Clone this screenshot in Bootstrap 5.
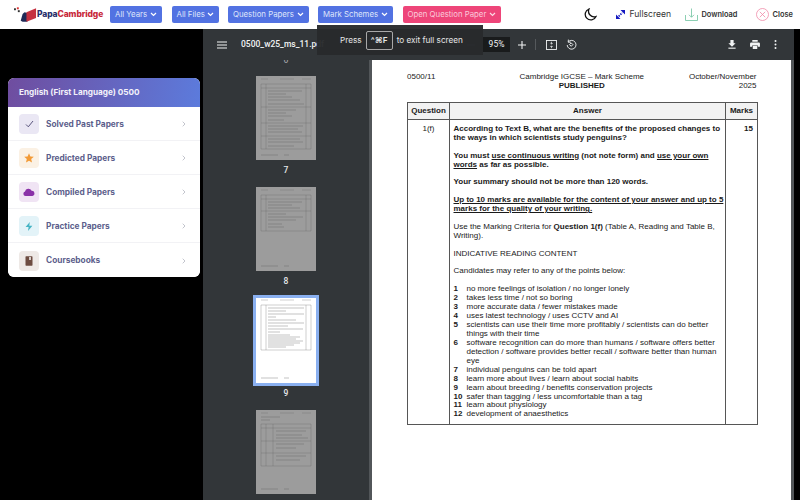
<!DOCTYPE html>
<html lang="en">
<head>
  <meta charset="UTF-8">
  <meta name="viewport" content="width=device-width, initial-scale=1.0">
  <title>PapaCambridge</title>
  <link href="https://cdn.jsdelivr.net/npm/bootstrap@5.3.0/dist/css/bootstrap.min.css" rel="stylesheet">
  <style>
    body {
      height: 500px;
      overflow: hidden;
      background-color: #000;
      font-family: "Inter", "Liberation Sans", sans-serif;
    }
    /* top bar */
    .top-bar {
      height: 29px;
      background-color: #fff;
      padding-left: 14px;
    }
    .logo-box {
      width: 96px;
    }
    .logo-text {
      font-size: 8.5px;
      font-weight: 800;
      color: #27306b;
      letter-spacing: -0.1px;
    }
    .logo-text span {
      color: #c8283a;
    }
    .paper-btn {
      height: 17px;
      padding: 0 5px;
      margin-right: 9.5px;
      border: 0;
      border-radius: 2px;
      background-color: #5272e2;
      color: #dfe5fb;
      font-size: 7.8px;
      line-height: 17px;
      white-space: nowrap;
      display: flex;
      align-items: center;
      justify-content: space-between;
    }
    .paper-btn:hover {
      background-color: #5272e2;
      color: #dfe5fb;
    }
    .paper-btn.pink {
      background-color: #ee4579;
      color: #fbc9d9;
    }
    .w-years { width: 52px; }
    .w-files { width: 47px; }
    .w-question { width: 81px; margin-right: 9px; }
    .w-mark { width: 75px; }
    .w-open { width: 98px; margin-right: 0; }
    .tool-moon { margin-left: 83px; width: 20px; }
    .tool-full {
      margin-left: 12px;
      gap: 5px;
      font-size: 8.6px;
      color: #333;
      width: 57px;
    }
    .tool-down {
      margin-left: 12px;
      gap: 4px;
      font-size: 7.4px;
      font-weight: 600;
      color: #333;
      width: 59px;
    }
    .tool-close {
      margin-left: 12px;
      gap: 4px;
      font-size: 7.4px;
      font-weight: 600;
      color: #333;
    }
    /* left menu */
    .left-side {
      width: 203px;
      padding: 49px 3px 0 8px;
      flex-shrink: 0;
    }
    .menu-card {
      border: 0;
      border-radius: 6px;
      overflow: hidden;
    }
    .menu-head {
      height: 29px;
      padding: 0 11px;
      background: linear-gradient(100deg, #6f4d9f, #5c7bdc);
      color: #f3f1fa;
      font-size: 8.2px;
      font-weight: 700;
      line-height: 29px;
      border: 0;
    }
    .menu-row {
      height: 34px;
      padding: 1px 14px 0 11px;
      gap: 7px;
      border-color: #f2f2f5;
      color: #5d5f8c;
      font-size: 8.3px;
      font-weight: 700;
    }
    .menu-icon {
      width: 20px;
      height: 20px;
      border-radius: 4px;
    }
    .ic-purple { background-color: #eae7f4; }
    .ic-orange { background-color: #fbf1e4; }
    .ic-violet { background-color: #f0e4f4; }
    .ic-cyan { background-color: #e3f3f8; }
    .ic-brown { background-color: #eee9e6; }
    /* pdf viewer */
    .pdf-viewer {
      width: 591px;
      height: 471px;
    }
    .pdf-toolbar {
      height: 31px;
      background-color: #323639;
      color: #f1f3f4;
      font-family: "Roboto", "Liberation Sans", sans-serif;
      font-size: 8.5px;
      padding-left: 14px;
    }
    .file-name {
      width: 147px;
      margin-left: 14px;
      font-weight: 500;
    }
    .page-count {
      width: 70px;
      color: #7c7f82;
    }
    .zoom-val {
      width: 27px;
      height: 15px;
      margin: 0 8px;
      line-height: 15px;
      text-align: center;
      background-color: #191b1c;
    }
    .bar-sep {
      width: 1px;
      height: 11px;
      margin: 0 10px 0 9px;
      background-color: #55595c;
    }
    .bar-right {
      margin-left: auto;
      gap: 14px;
      padding-right: 17px;
    }
    .bar-gap { margin-left: 9px; }
    .pdf-body {
      height: 440px;
    }
    .thumb-side {
      width: 166px;
      background-color: #323639;
      color: #e8eaed;
      font-family: "Roboto", "Liberation Sans", sans-serif;
      font-size: 8.5px;
      font-weight: 500;
      text-align: center;
      overflow: hidden;
      flex-shrink: 0;
    }
    .thumb-num-top {
      height: 16px;
      line-height: 0;
      color: #9a9da0;
    }
    .thumb-page {
      display: block;
      width: 60px;
      height: 84px;
      margin: 0 auto;
    }
    .thumb-num {
      height: 27px;
      line-height: 21px;
    }
    .thumb-on {
      width: 66px;
      height: 91px;
      margin: -3px auto 0;
      border: 3px solid #8ab0f0;
      background-color: #fff;
    }
    .thumb-on .thumb-page {
      margin: 0;
      height: 85px;
    }
    .thumb-on + .thumb-num {
      height: 24px;
      line-height: 15px;
    }
    .page-side {
      flex: 1;
      padding: 0 3px;
      background-color: #525659;
      overflow: hidden;
    }
    .paper-sheet {
      height: 440px;
      padding: 13px 34.5px 0 35px;
      background-color: #fff;
      color: #1a1a1a;
      font-family: "Liberation Sans", Arial, sans-serif;
      font-size: 8px;
      line-height: 8.95px;
    }
    .sheet-head {
      height: 29px;
    }
    .sheet-head > div {
      flex: 1;
    }
    .scheme-tbl {
      width: 350px;
      table-layout: fixed;
      border-collapse: collapse;
      margin: 0;
    }
    .scheme-tbl td, .scheme-tbl th {
      border: 1.5px solid #565656;
      padding: 0;
      color: #1a1a1a;
      background: transparent;
      box-shadow: none;
    }
    .scheme-tbl th {
      height: 17px;
      text-align: center;
      vertical-align: middle;
      background-color: #f2f2f2;
      font-weight: 700;
    }
    .scheme-tbl td {
      vertical-align: top;
      padding-top: 5px;
      padding-bottom: 5px;
    }
    .col-answer {
      padding-left: 3.5px !important;
      padding-right: 1px !important;
    }
    .answer-gap {
      margin-bottom: 8.8px;
    }
    .point-row {
      display: grid;
      grid-template-columns: 13px 1fr;
      padding-right: 2px;
    }
    /* fullscreen notice */
    .exit-note {
      position: absolute;
      top: 25px;
      left: 317px;
      width: 166px;
      height: 30px;
      padding-top: 1px;
      padding-left: 3px;
      background-color: rgba(40, 42, 44, 0.96);
      color: #e6e6e6;
      font-family: "Inter", "Liberation Sans", sans-serif;
      font-size: 8.2px;
      gap: 4px;
    }
    .exit-key {
      width: 27px;
      height: 19px;
      line-height: 17px;
      text-align: center;
      border: 1px solid #a8a8a8;
      border-radius: 2px;
      font-weight: 600;
    }
  </style>
</head>
<body class="position-relative">
  <div class="top-bar d-flex align-items-center">
    <div class="logo-box d-flex align-items-center">
      <svg width="23" height="16" viewBox="0 0 24 16">
        <rect x="0" y="1" width="2" height="2" fill="#333"/>
        <rect x="3" y="0" width="2" height="2" fill="#d33"/>
        <rect x="4" y="3" width="2" height="2" fill="#333"/>
        <path d="M7 14 L9 7 L11 5 L14 6 L14 15 L9 15 Z" fill="#1f2a57"/>
        <path d="M13 5 L23 1 L23 11 L13 15 Z" fill="#c5303f"/>
      </svg>
      <span class="logo-text">Papa<span>Cambridge</span></span>
    </div>
    <button class="btn paper-btn w-years">All Years <svg width="7" height="5" viewBox="0 0 7 5"><path d="M1 1 L3.5 3.5 L6 1" fill="none" stroke="#fff" stroke-width="1.2"/></svg></button>
    <button class="btn paper-btn w-files">All Files <svg width="7" height="5" viewBox="0 0 7 5"><path d="M1 1 L3.5 3.5 L6 1" fill="none" stroke="#fff" stroke-width="1.2"/></svg></button>
    <button class="btn paper-btn w-question">Question Papers <svg width="7" height="5" viewBox="0 0 7 5"><path d="M1 1 L3.5 3.5 L6 1" fill="none" stroke="#fff" stroke-width="1.2"/></svg></button>
    <button class="btn paper-btn w-mark">Mark Schemes <svg width="7" height="5" viewBox="0 0 7 5"><path d="M1 1 L3.5 3.5 L6 1" fill="none" stroke="#fff" stroke-width="1.2"/></svg></button>
    <button class="btn paper-btn pink w-open">Open Question Paper <svg width="7" height="5" viewBox="0 0 7 5"><path d="M1 1 L3.5 3.5 L6 1" fill="none" stroke="#fbd9e4" stroke-width="1.2"/></svg></button>
    <div class="tool-moon d-flex">
      <svg width="13" height="13" viewBox="0 0 13 13"><path d="M5 1 A5.6 5.6 0 1 0 12 8.5 A5.6 5.6 0 0 1 5 1 Z" fill="none" stroke="#111" stroke-width="1.3"/></svg>
    </div>
    <div class="tool-full d-flex align-items-center">
      <svg width="9" height="9" viewBox="0 0 10 10"><path d="M0 10 L0 5 L5 10 Z M10 0 L10 5 L5 0 Z" fill="#1418c0"/><path d="M3 7 L7 3" stroke="#1418c0" stroke-width="2" stroke-dasharray="1.5 1.2"/></svg>
      <span>Fullscreen</span>
    </div>
    <div class="tool-down d-flex align-items-center">
      <svg width="13" height="13" viewBox="0 0 13 13" fill="none" stroke="#6fc3a0" stroke-width="0.8"><path d="M0.5 7 L0.5 12.5 L12.5 12.5 L12.5 7"/><path d="M6.5 0.5 L6.5 9 M4 6.8 L6.5 9.3 L9 6.8"/></svg>
      <span>Download</span>
    </div>
    <div class="tool-close d-flex align-items-center">
      <svg width="13" height="13" viewBox="0 0 13 13" fill="none" stroke="#f08aa8" stroke-width="0.8"><circle cx="6.5" cy="6.5" r="6"/><path d="M3.8 3.8 L9.2 9.2 M9.2 3.8 L3.8 9.2"/></svg>
      <span>Close</span>
    </div>
  </div>

  <div class="d-flex">
    <div class="left-side">
      <div class="card menu-card">
        <div class="card-header menu-head">English (First Language) 0500</div>
        <div class="list-group list-group-flush">
          <div class="list-group-item menu-row d-flex align-items-center">
            <span class="menu-icon ic-purple d-flex align-items-center justify-content-center"><svg width="9" height="8" viewBox="0 0 9 8"><path d="M1 4.5 L3.3 6.8 L8 1" fill="none" stroke="#4b4570" stroke-width="0.9"/></svg></span>
            <span class="flex-grow-1">Solved Past Papers</span>
            <svg width="4" height="6" viewBox="0 0 4 6"><path d="M0.7 0.7 L3 3 L0.7 5.3" fill="none" stroke="#b4b6c0" stroke-width="0.8"/></svg>
          </div>
          <div class="list-group-item menu-row d-flex align-items-center">
            <span class="menu-icon ic-orange d-flex align-items-center justify-content-center"><svg width="10" height="10" viewBox="0 0 10 10"><path d="M5 0.3 L6.4 3.5 L9.8 3.8 L7.2 6.1 L8 9.6 L5 7.8 L2 9.6 L2.8 6.1 L0.2 3.8 L3.6 3.5 Z" fill="#f39a36"/></svg></span>
            <span class="flex-grow-1">Predicted Papers</span>
            <svg width="4" height="6" viewBox="0 0 4 6"><path d="M0.7 0.7 L3 3 L0.7 5.3" fill="none" stroke="#b4b6c0" stroke-width="0.8"/></svg>
          </div>
          <div class="list-group-item menu-row d-flex align-items-center">
            <span class="menu-icon ic-violet d-flex align-items-center justify-content-center"><svg width="12" height="8" viewBox="0 0 12 8"><path d="M2.5 8 A2.3 2.3 0 0 1 2 3.5 A3.5 3.5 0 0 1 8.6 2.7 A2.7 2.7 0 0 1 9.5 8 Z" fill="#8a32a8"/></svg></span>
            <span class="flex-grow-1">Compiled Papers</span>
            <svg width="4" height="6" viewBox="0 0 4 6"><path d="M0.7 0.7 L3 3 L0.7 5.3" fill="none" stroke="#b4b6c0" stroke-width="0.8"/></svg>
          </div>
          <div class="list-group-item menu-row d-flex align-items-center">
            <span class="menu-icon ic-cyan d-flex align-items-center justify-content-center"><svg width="8" height="9" viewBox="0 0 8 9"><path d="M4.8 0 L0.6 5 L3.6 5 L3 9 L7.4 3.8 L4.3 3.8 Z" fill="#45b4c4"/></svg></span>
            <span class="flex-grow-1">Practice Papers</span>
            <svg width="4" height="6" viewBox="0 0 4 6"><path d="M0.7 0.7 L3 3 L0.7 5.3" fill="none" stroke="#b4b6c0" stroke-width="0.8"/></svg>
          </div>
          <div class="list-group-item menu-row d-flex align-items-center">
            <span class="menu-icon ic-brown d-flex align-items-center justify-content-center"><svg width="8" height="10" viewBox="0 0 8 10"><rect x="0.5" y="0.3" width="7" height="9.4" rx="0.6" fill="#6d4c41"/><rect x="4" y="1" width="2" height="3" fill="#d7ccc8"/></svg></span>
            <span class="flex-grow-1">Coursebooks</span>
            <svg width="4" height="6" viewBox="0 0 4 6"><path d="M0.7 0.7 L3 3 L0.7 5.3" fill="none" stroke="#b4b6c0" stroke-width="0.8"/></svg>
          </div>
        </div>
      </div>
    </div>

    <div class="pdf-viewer">
      <div class="pdf-toolbar d-flex align-items-center">
        <svg width="10" height="8" viewBox="0 0 10 8"><path d="M0 1 H10 M0 4 H10 M0 7 H10" stroke="#f1f3f4" stroke-width="1.1"/></svg>
        <span class="file-name">0500_w25_ms_11.pdf</span>
        <span class="page-count text-end">9 / 23</span>
        <svg class="bar-gap" width="8" height="2" viewBox="0 0 8 2"><path d="M0 1 H8" stroke="#7c7f82" stroke-width="1.1"/></svg>
        <span class="zoom-val">95%</span>
        <svg width="8" height="8" viewBox="0 0 8 8"><path d="M0 4 H8 M4 0 V8" stroke="#f1f3f4" stroke-width="1.1"/></svg>
        <span class="bar-sep"></span>
        <svg width="11" height="10" viewBox="0 0 11 10" fill="none" stroke="#f1f3f4"><rect x="0.5" y="0.5" width="10" height="9" stroke-width="0.9"/><path d="M5.5 1.8 V4 M4.3 3 L5.5 4.2 L6.7 3 M5.5 8.2 V6 M4.3 7 L5.5 5.8 L6.7 7" stroke-width="0.7"/></svg>
        <svg class="bar-gap" width="11" height="11" viewBox="0 0 11 11" fill="none" stroke="#f1f3f4" stroke-width="0.9"><path d="M2.2 3 A4.4 4.4 0 1 1 1.2 6"/><path d="M2.4 0.6 L2.2 3.2 L4.8 3.2"/><rect x="4" y="4.4" width="2.4" height="2.4" transform="rotate(45 5.2 5.6)"/></svg>
        <div class="bar-right d-flex align-items-center">
          <svg width="8" height="9" viewBox="0 0 10 11" fill="#f1f3f4"><path d="M3 0 H7 V4 H9.5 L5 8.2 L0.5 4 H3 Z"/><rect x="0.5" y="9.4" width="9" height="1.4"/></svg>
          <svg width="10" height="9" viewBox="0 0 11 10" fill="#f1f3f4"><path d="M2.5 0 H8.5 V2 H2.5 Z M1.5 2.8 H9.5 A1.4 1.4 0 0 1 11 4.2 V7.5 H8.7 V6 H2.3 V7.5 H0 V4.2 A1.4 1.4 0 0 1 1.5 2.8 Z M3 6.8 H8 V10 H3 Z"/></svg>
          <svg width="3" height="9" viewBox="0 0 3 10" fill="#f1f3f4"><circle cx="1.5" cy="1.2" r="1.1"/><circle cx="1.5" cy="5" r="1.1"/><circle cx="1.5" cy="8.8" r="1.1"/></svg>
        </div>
      </div>

      <div class="pdf-body d-flex">
        <div class="thumb-side">
          <div class="thumb-num-top">6</div>
          <svg class="thumb-page" viewBox="0 0 60 84">
            <rect width="60" height="84" fill="#9c9c9c"/>
            <path d="M5 3 H12 M24 3 H38 M46 3 H55 M5 8 H55 M5 12 H55 M5 8 V73 M10 8 V73 M50 8 V73 M55 8 V73 M5 31 H55 M5 47 H55 M5 60 H55 M5 73 H55" stroke="#6a6a6a" stroke-width="0.35" fill="none"/>
            <path d="M12 15 H46 M12 18 H30 M12 21 H36 M12 24 H44 M12 28 H48 M12 34 H40 M12 37 H30 M12 40 H36 M12 44 H28 M12 50 H47 M12 53 H42 M12 56 H46 M12 63 H44 M12 66 H47 M12 70 H38 M5 79 H22 M28 79 H33" stroke="#7b7b7b" stroke-width="0.7" fill="none"/>
          </svg>
          <div class="thumb-num">7</div>
          <svg class="thumb-page" viewBox="0 0 60 84">
            <rect width="60" height="84" fill="#9c9c9c"/>
            <path d="M5 3 H12 M24 3 H38 M46 3 H55 M5 8 H55 M5 12 H55 M5 8 V44 M10 8 V44 M50 8 V44 M55 8 V44 M5 24 H55 M5 44 H55" stroke="#6a6a6a" stroke-width="0.35" fill="none"/>
            <path d="M12 15 H46 M12 18 H36 M12 21 H44 M12 27 H30 M12 30 H47 M12 33 H40 M12 37 H26 M12 40 H28 M5 79 H22 M28 79 H33" stroke="#7b7b7b" stroke-width="0.7" fill="none"/>
          </svg>
          <div class="thumb-num">8</div>
          <div class="thumb-on">
            <svg class="thumb-page" viewBox="0 0 60 85">
              <rect width="60" height="85" fill="#fff"/>
              <path d="M5 2 H12 M24 2 H38 M46 2 H55 M5 7 H55 M5 7 V52 M10 7 V52 M50 7 V52 M55 7 V52 M5 52 H55" stroke="#777" stroke-width="0.35" fill="none"/>
              <path d="M12 10 H48 M12 13 H30 M12 16 H48 M12 19 H20 M12 22 H40 M12 25 H48 M12 28 H32 M12 31 H47 M12 34 H24 M12 37 H34 M12 39 H44 M12 41 H40 M12 43 H47 M12 45 H44 M12 47 H38 M12 49 H30 M5 80 H22 M28 80 H33" stroke="#aaa" stroke-width="0.7" fill="none"/>
            </svg>
          </div>
          <div class="thumb-num">9</div>
          <svg class="thumb-page" viewBox="0 0 60 84">
            <rect width="60" height="84" fill="#9c9c9c"/>
            <path d="M5 3 H12 M24 3 H38 M46 3 H55 M5 14 H55 M5 18 H55 M5 14 V56 M10 14 V56 M17 14 V56 M55 14 V56 M5 31 H55 M5 43 H55 M5 56 H55" stroke="#6a6a6a" stroke-width="0.35" fill="none"/>
            <path d="M5 7 H24 M5 10 H14 M20 21 H50 M20 25 H46 M20 28 H52 M20 34 H48 M20 38 H40 M20 46 H50 M20 50 H44 M5 79 H22 M28 79 H33" stroke="#7b7b7b" stroke-width="0.7" fill="none"/>
          </svg>
        </div>

        <div class="page-side">
          <div class="paper-sheet">
            <div class="sheet-head d-flex">
              <div>0500/11</div>
              <div class="text-center text-nowrap">Cambridge IGCSE – Mark Scheme<br><b>PUBLISHED</b></div>
              <div class="text-end">October/November<br>2025</div>
            </div>
            <table class="table scheme-tbl">
              <colgroup><col style="width: 42px"><col style="width: 276px"><col style="width: 32px"></colgroup>
              <thead>
                <tr><th>Question</th><th>Answer</th><th>Marks</th></tr>
              </thead>
              <tbody>
                <tr>
                  <td class="text-center">1(f)</td>
                  <td class="col-answer">
                    <div class="answer-gap"><b>According to Text B, what are the benefits of the proposed changes to the ways in which scientists study penguins?</b></div>
                    <div class="answer-gap"><b>You must <u>use continuous writing</u> (not note form) and <u>use your own words</u> as far as possible.</b></div>
                    <div class="answer-gap"><b>Your summary should not be more than 120 words.</b></div>
                    <div class="answer-gap"><b><u>Up to 10 marks are available for the content of your answer and up to 5 marks for the quality of your writing.</u></b></div>
                    <div class="answer-gap">Use the Marking Criteria for <b>Question 1(f)</b> (Table A, Reading and Table B, Writing).</div>
                    <div class="answer-gap">INDICATIVE READING CONTENT</div>
                    <div class="answer-gap">Candidates may refer to any of the points below:</div>
                    <div class="point-row"><b>1</b><span>no more feelings of isolation / no longer lonely</span></div>
                    <div class="point-row"><b>2</b><span>takes less time / not so boring</span></div>
                    <div class="point-row"><b>3</b><span>more accurate data / fewer mistakes made</span></div>
                    <div class="point-row"><b>4</b><span>uses latest technology / uses CCTV and AI</span></div>
                    <div class="point-row"><b>5</b><span>scientists can use their time more profitably / scientists can do better things with their time</span></div>
                    <div class="point-row"><b>6</b><span>software recognition can do more than humans / software offers better detection / software provides better recall / software better than human eye</span></div>
                    <div class="point-row"><b>7</b><span>individual penguins can be told apart</span></div>
                    <div class="point-row"><b>8</b><span>learn more about lives / learn about social habits</span></div>
                    <div class="point-row"><b>9</b><span>learn about breeding / benefits conservation projects</span></div>
                    <div class="point-row"><b>10</b><span>safer than tagging / less uncomfortable than a tag</span></div>
                    <div class="point-row"><b>11</b><span>learn about physiology</span></div>
                    <div class="point-row"><b>12</b><span>development of anaesthetics</span></div>
                  </td>
                  <td class="text-end pe-1"><b>15</b></td>
                </tr>
              </tbody>
            </table>
          </div>
        </div>
      </div>
    </div>
  </div>

  <div class="exit-note d-flex align-items-center justify-content-center">
    <span>Press</span>
    <span class="exit-key">^⌘F</span>
    <span>to exit full screen</span>
  </div>

  <script src="https://cdn.jsdelivr.net/npm/bootstrap@5.3.0/dist/js/bootstrap.bundle.min.js"></script>
</body>
</html>
